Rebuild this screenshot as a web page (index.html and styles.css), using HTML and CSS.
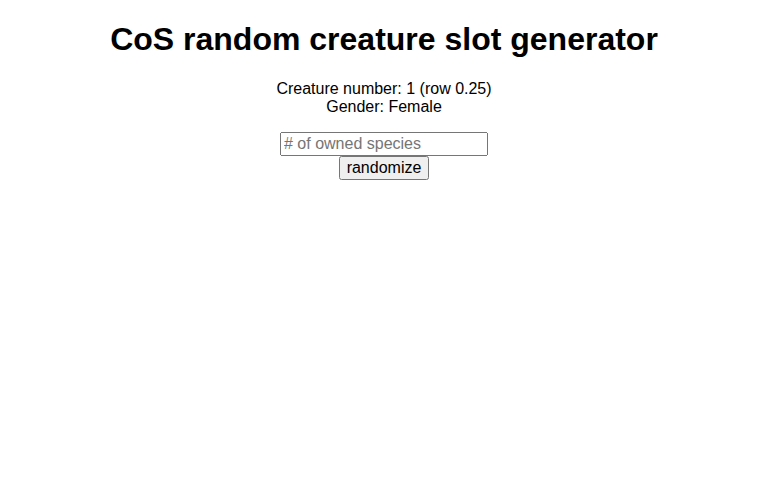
FILE: index.html
```html
<!DOCTYPE html>
<html>
<head>
<meta charset="utf-8">
<title>CoS random creature slot generator</title>
<link rel="stylesheet" href="styles.css">
</head>
<body>
<div class="page">
<h1 class="title">CoS random creature slot generator</h1>
<p class="result">Creature number: 1 (row 0.25)<br>Gender: Female</p>
<input class="species" type="text" placeholder="# of owned species"><br>
<button class="randomize" type="button">randomize</button>
</div>
</body>
</html>
```

FILE: styles.css
```css
body {
  margin: 0;
  font-family: "Liberation Sans", Arial, sans-serif;
  font-size: 16px;
  color: #000;
  background: #fff;
}
.page {
  text-align: center;
}
.title {
  font-size: 32px;
  font-weight: bold;
  margin: 21.44px 0;
}
.result {
  margin: 16px 0;
}
.species {
  font-family: "Liberation Sans", Arial, sans-serif;
  font-size: 16px;
  width: 200px;
}
.randomize {
  font-family: "Liberation Sans", Arial, sans-serif;
  font-size: 16px;
}
```
